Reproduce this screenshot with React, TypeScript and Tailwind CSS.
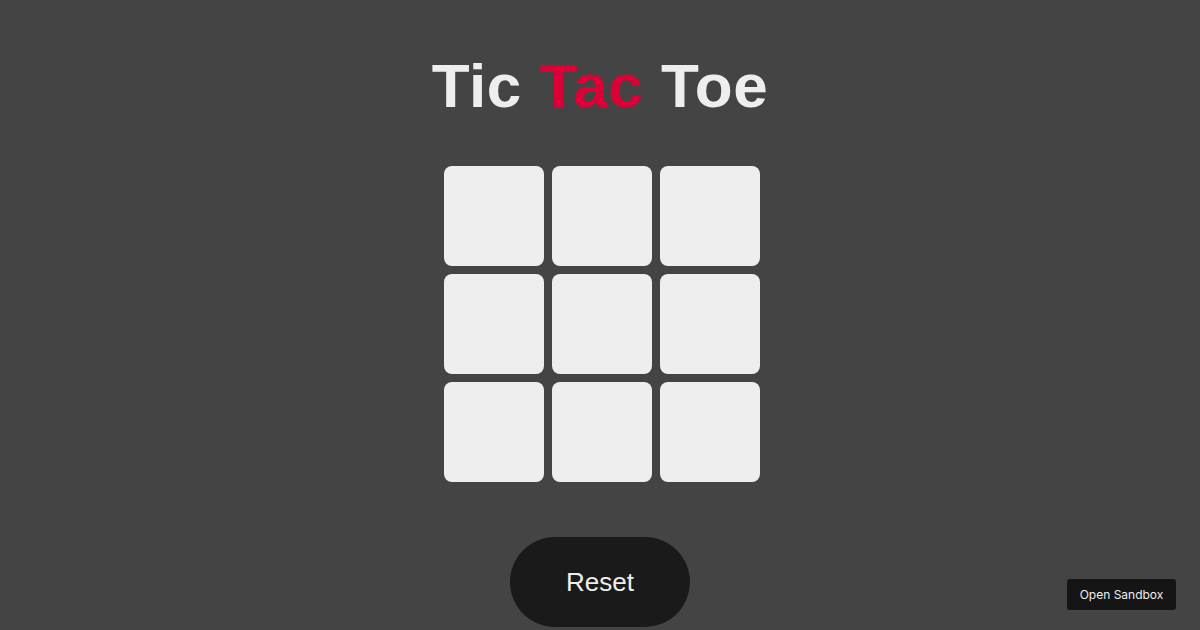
export default function App() {
  const cells = Array.from({ length: 9 });
  return (
    <div className="relative flex h-[630px] w-full flex-col items-center bg-[#444444] font-['Liberation_Sans',Arial,sans-serif]">
      <h1 className="mt-[55px] text-[62px] font-bold leading-none tracking-[0.5px] text-[#eeeeee]">
        Tic <span className="text-[#dc0037]">Tac</span> Toe
      </h1>
      <div className="ml-1 mt-[49px] grid grid-cols-[repeat(3,100px)] gap-2">
        {cells.map((_, i) => (
          <button key={i} className="h-[100px] w-[100px] rounded-lg bg-[#eeeeee]" />
        ))}
      </div>
      <button className="mt-[55px] flex h-[90px] w-[180px] items-center justify-center rounded-full bg-[#1a1a1a] text-[26px] text-[#eeeeee]">
        Reset
      </button>
      <div className="absolute bottom-[20px] right-[24px] flex h-[31px] w-[109px] items-center justify-center rounded-[3px] bg-[#151515] font-['Inter',sans-serif] text-[12px] text-[#eeeeee]">
        Open Sandbox
      </div>
    </div>
  );
}
